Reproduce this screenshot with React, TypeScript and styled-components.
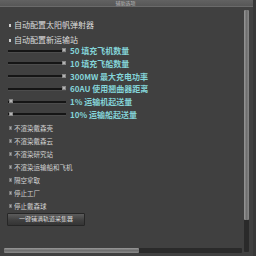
import React from 'react';
import styled, { createGlobalStyle } from 'styled-components';

const GlobalStyle = createGlobalStyle`
  body {
    margin: 0;
    background: #404040;
    font-family: "Noto Sans CJK SC", "Noto Sans", sans-serif;
  }
`;

const Window = styled.div`
  width: 256px;
  height: 256px;
  display: grid;
  grid-template-columns: 1fr 10px;
  grid-template-rows: 7px 1fr;
  background: #404040;
  overflow: hidden;
  box-sizing: border-box;
  border-right: 3px solid #383838;
`;

const TitleBar = styled.div`
  grid-column: 1 / 3;
  background: linear-gradient(#626262, #575757);
  border-bottom: 1px solid #6a6a6a;
  display: flex;
  align-items: center;
  justify-content: center;
  font-size: 5px;
  line-height: 6px;
  color: #b8b8b8;
  padding-right: 2px;
`;

const LeftColumn = styled.div`
  display: flex;
  flex-direction: column;
  min-height: 0;
`;

const Content = styled.div`
  flex: 1;
  padding: 13px 0 0 8px;
  display: flex;
  flex-direction: column;
  overflow: hidden;
`;

const TopGroup = styled.div`
  display: flex;
  flex-direction: column;
  gap: 5px;
  flex-shrink: 0;
`;

const CheckRow = styled.div<{ $big?: boolean }>`
  height: ${p => (p.$big ? 10 : 13)}px;
  flex-shrink: 0;
  display: flex;
  align-items: center;
  gap: ${p => (p.$big ? 3 : 2)}px;
  padding-left: 1px;
  font-size: ${p => (p.$big ? 8 : 6.5)}px;
  line-height: 1;
  color: ${p => (p.$big ? '#dcdcdc' : '#d2d2d2')};
  white-space: nowrap;
`;

const Box = styled.span<{ $big?: boolean }>`
  width: ${p => (p.$big ? 2 : 3)}px;
  height: ${p => (p.$big ? 3 : 4)}px;
  background: ${p => (p.$big ? '#d0d0d0' : '#a8a8a8')};
  border: ${p => (p.$big ? 'none' : '0.5px solid #777')};
  box-sizing: border-box;
  flex-shrink: 0;
`;

const SliderGroup = styled.div`
  margin-top: -0.4px;
  flex-shrink: 0;
`;

const SliderRow = styled.div`
  height: 12.8px;
  display: flex;
  align-items: center;
  gap: 4px;
  white-space: nowrap;
`;

const Track = styled.div`
  position: relative;
  width: 58px;
  height: 2px;
  background: #151515;
  border-bottom: 1px solid #4c4c4c;
`;

const Thumb = styled.span`
  position: absolute;
  top: -1.5px;
  width: 4px;
  height: 4px;
  background: #b4b4b4;
  border: 0.5px solid #888;
  box-sizing: border-box;
`;

const SliderLabel = styled.span`
  font-size: 8px;
  line-height: 1;
  font-weight: 700;
  color: #84d4d8;
`;

const Button = styled.div`
  margin: 0.5px 0 0 -1px;
  flex-shrink: 0;
  width: 78px;
  height: 13px;
  box-sizing: border-box;
  border: 1px solid #262626;
  border-radius: 1px;
  background: linear-gradient(#5c5c5c, #404040 55%, #343434);
  display: flex;
  align-items: center;
  justify-content: center;
  font-size: 6px;
  line-height: 1;
  color: #dadada;
`;

const HScroll = styled.div`
  height: 5px;
  margin: 0 1px 3px 4px;
  background: #2a2a2a;
  border-radius: 1px;
  display: flex;
`;

const HThumb = styled.div`
  width: 135px;
  background: linear-gradient(#9a9a9a, #6e6e6e 50%, #8a8a8a);
  border-radius: 1px;
`;

const VScroll = styled.div`
  margin: 3px 4px 4px 1px;
  background: #2a2a2a;
  border-radius: 1px;
  display: flex;
  flex-direction: column;
`;

const VThumb = styled.div`
  height: 210px;
  background: linear-gradient(90deg, #9a9a9a, #6e6e6e 50%, #8a8a8a);
  border-radius: 1px;
`;

const topChecks = ['自动配置太阳帆弹射器', '自动配置新运输站'];

const sliders = [
  { label: '50 填充飞机数量', pos: 1 },
  { label: '10 填充飞船数量', pos: 1 },
  { label: '300MW 最大充电功率', pos: 1 },
  { label: '60AU 使用翘曲器距离', pos: 1 },
  { label: '1% 运输机起送量', pos: 0.02 },
  { label: '10% 运输船起送量', pos: 0.02 },
];

const lowerChecks = [
  '不渲染戴森壳',
  '不渲染戴森云',
  '不渲染研究站',
  '不渲染运输船和飞机',
  '隔空拿取',
  '停止工厂',
  '停止戴森球',
];

const App: React.FC = () => {
  return (
    <>
      <GlobalStyle />
      <Window>
        <TitleBar>辅助选项</TitleBar>
        <LeftColumn>
          <Content>
            <TopGroup>
              {topChecks.map(t => (
                <CheckRow $big key={t}>
                  <Box $big />
                  {t}
                </CheckRow>
              ))}
            </TopGroup>
            <SliderGroup>
              {sliders.map(s => (
                <SliderRow key={s.label}>
                  <Track>
                    <Thumb style={{ left: `${s.pos * 54}px` }} />
                  </Track>
                  <SliderLabel>{s.label}</SliderLabel>
                </SliderRow>
              ))}
            </SliderGroup>
            {lowerChecks.map(t => (
              <CheckRow key={t}>
                <Box />
                {t}
              </CheckRow>
            ))}
            <Button>一键铺满轨道采集器</Button>
          </Content>
          <HScroll>
            <HThumb />
          </HScroll>
        </LeftColumn>
        <VScroll>
          <VThumb />
        </VScroll>
      </Window>
    </>
  );
};

export default App;
